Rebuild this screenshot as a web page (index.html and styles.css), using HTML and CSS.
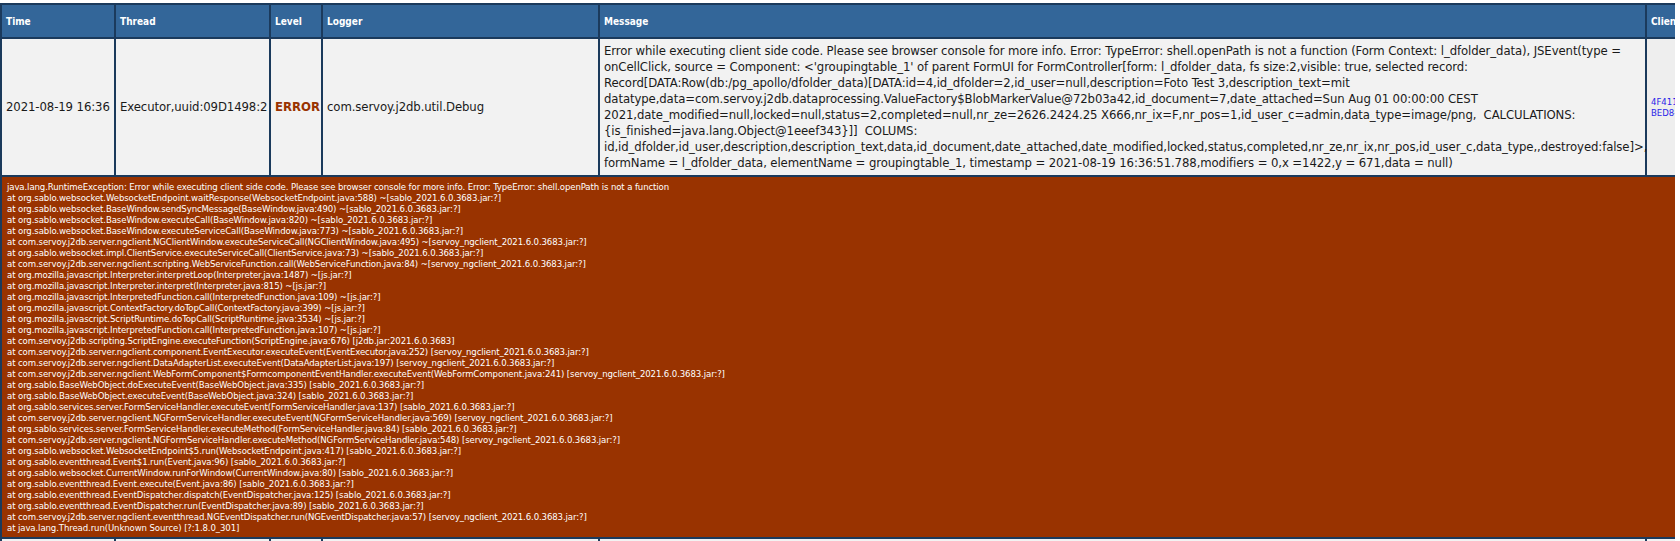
FILE: index.html
```html
<!DOCTYPE html>
<html lang="en">
<head>
<meta charset="utf-8">
<title>Log</title>
<link rel="stylesheet" href="styles.css">
</head>
<body>
<div class="viewport">
<table class="log">
<colgroup><col class="c-time"><col class="c-thread"><col class="c-level"><col class="c-logger"><col class="c-msg"><col class="c-client"></colgroup>
<thead>
<tr><th>Time</th><th>Thread</th><th>Level</th><th>Logger</th><th>Message</th><th>Client</th></tr>
</thead>
<tbody>
<tr class="entry">
<td>2021-08-19 16:36</td>
<td>Executor,uuid:09D1498:2</td>
<td class="level">ERROR</td>
<td>com.servoy.j2db.util.Debug</td>
<td>Error while executing client side code. Please see browser console for more info. Error: TypeError: shell.openPath is not a function (Form Context: l_dfolder_data), JSEvent(type =<br>onCellClick, source = Component: &lt;'groupingtable_1' of parent FormUI for FormController[form: l_dfolder_data, fs size:2,visible: true, selected record:<br>Record[DATA:Row(db:/pg_apollo/dfolder_data)[DATA:id=4,id_dfolder=2,id_user=null,description=Foto Test 3,description_text=mit<br>datatype,data=com.servoy.j2db.dataprocessing.ValueFactory$BlobMarkerValue@72b03a42,id_document=7,date_attached=Sun Aug 01 00:00:00 CEST<br>2021,date_modified=null,locked=null,status=2,completed=null,nr_ze=2626.2424.25 X666,nr_ix=F,nr_pos=1,id_user_c=admin,data_type=image/png, &nbsp;CALCULATIONS:<br>{is_finished=java.lang.Object@1eeef343}]] &nbsp;COLUMS:<br>id,id_dfolder,id_user,description,description_text,data,id_document,date_attached,date_modified,locked,status,completed,nr_ze,nr_ix,nr_pos,id_user_c,data_type,,destroyed:false]&gt;,<br>formName = l_dfolder_data, elementName = groupingtable_1, timestamp = 2021-08-19 16:36:51.788,modifiers = 0,x =1422,y = 671,data = null)</td>
<td class="client"><span class="uuid">4F411E60-</span><br><span class="uuid">BED8-4B4C</span></td>
</tr>
<tr class="trace">
<td colspan="6">java.lang.RuntimeException: Error while executing client side code. Please see browser console for more info. Error: TypeError: shell.openPath is not a function<br>
at org.sablo.websocket.WebsocketEndpoint.waitResponse(WebsocketEndpoint.java:588) ~[sablo_2021.6.0.3683.jar:?]<br>
at org.sablo.websocket.BaseWindow.sendSyncMessage(BaseWindow.java:490) ~[sablo_2021.6.0.3683.jar:?]<br>
at org.sablo.websocket.BaseWindow.executeCall(BaseWindow.java:820) ~[sablo_2021.6.0.3683.jar:?]<br>
at org.sablo.websocket.BaseWindow.executeServiceCall(BaseWindow.java:773) ~[sablo_2021.6.0.3683.jar:?]<br>
at com.servoy.j2db.server.ngclient.NGClientWindow.executeServiceCall(NGClientWindow.java:495) ~[servoy_ngclient_2021.6.0.3683.jar:?]<br>
at org.sablo.websocket.impl.ClientService.executeServiceCall(ClientService.java:73) ~[sablo_2021.6.0.3683.jar:?]<br>
at com.servoy.j2db.server.ngclient.scripting.WebServiceFunction.call(WebServiceFunction.java:84) ~[servoy_ngclient_2021.6.0.3683.jar:?]<br>
at org.mozilla.javascript.Interpreter.interpretLoop(Interpreter.java:1487) ~[js.jar:?]<br>
at org.mozilla.javascript.Interpreter.interpret(Interpreter.java:815) ~[js.jar:?]<br>
at org.mozilla.javascript.InterpretedFunction.call(InterpretedFunction.java:109) ~[js.jar:?]<br>
at org.mozilla.javascript.ContextFactory.doTopCall(ContextFactory.java:399) ~[js.jar:?]<br>
at org.mozilla.javascript.ScriptRuntime.doTopCall(ScriptRuntime.java:3534) ~[js.jar:?]<br>
at org.mozilla.javascript.InterpretedFunction.call(InterpretedFunction.java:107) ~[js.jar:?]<br>
at com.servoy.j2db.scripting.ScriptEngine.executeFunction(ScriptEngine.java:676) [j2db.jar:2021.6.0.3683]<br>
at com.servoy.j2db.server.ngclient.component.EventExecutor.executeEvent(EventExecutor.java:252) [servoy_ngclient_2021.6.0.3683.jar:?]<br>
at com.servoy.j2db.server.ngclient.DataAdapterList.executeEvent(DataAdapterList.java:197) [servoy_ngclient_2021.6.0.3683.jar:?]<br>
at com.servoy.j2db.server.ngclient.WebFormComponent$FormcomponentEventHandler.executeEvent(WebFormComponent.java:241) [servoy_ngclient_2021.6.0.3683.jar:?]<br>
at org.sablo.BaseWebObject.doExecuteEvent(BaseWebObject.java:335) [sablo_2021.6.0.3683.jar:?]<br>
at org.sablo.BaseWebObject.executeEvent(BaseWebObject.java:324) [sablo_2021.6.0.3683.jar:?]<br>
at org.sablo.services.server.FormServiceHandler.executeEvent(FormServiceHandler.java:137) [sablo_2021.6.0.3683.jar:?]<br>
at com.servoy.j2db.server.ngclient.NGFormServiceHandler.executeEvent(NGFormServiceHandler.java:569) [servoy_ngclient_2021.6.0.3683.jar:?]<br>
at org.sablo.services.server.FormServiceHandler.executeMethod(FormServiceHandler.java:84) [sablo_2021.6.0.3683.jar:?]<br>
at com.servoy.j2db.server.ngclient.NGFormServiceHandler.executeMethod(NGFormServiceHandler.java:548) [servoy_ngclient_2021.6.0.3683.jar:?]<br>
at org.sablo.websocket.WebsocketEndpoint$5.run(WebsocketEndpoint.java:417) [sablo_2021.6.0.3683.jar:?]<br>
at org.sablo.eventthread.Event$1.run(Event.java:96) [sablo_2021.6.0.3683.jar:?]<br>
at org.sablo.websocket.CurrentWindow.runForWindow(CurrentWindow.java:80) [sablo_2021.6.0.3683.jar:?]<br>
at org.sablo.eventthread.Event.execute(Event.java:86) [sablo_2021.6.0.3683.jar:?]<br>
at org.sablo.eventthread.EventDispatcher.dispatch(EventDispatcher.java:125) [sablo_2021.6.0.3683.jar:?]<br>
at org.sablo.eventthread.EventDispatcher.run(EventDispatcher.java:89) [sablo_2021.6.0.3683.jar:?]<br>
at com.servoy.j2db.server.ngclient.eventthread.NGEventDispatcher.run(NGEventDispatcher.java:57) [servoy_ngclient_2021.6.0.3683.jar:?]<br>
at java.lang.Thread.run(Unknown Source) [?:1.8.0_301]</td>
</tr>
<tr class="next"><td></td><td></td><td></td><td></td><td></td><td></td></tr>
</tbody>
</table>
</div>
</body>
</html>
```
FILE: styles.css
```css
html, body { margin: 0; padding: 0; background: #fff; }
body { height: 541px; overflow: hidden; }
.viewport { width: 1675px; height: 541px; overflow: hidden; padding-top: 3px; box-sizing: border-box; }
.log {
  table-layout: fixed;
  border-collapse: collapse;
  width: 1800px;
  font-family: "DejaVu Sans Condensed", "DejaVu Sans", sans-serif;
  font-stretch: condensed;
  font-size: 13px;
  letter-spacing: -0.1px;
  color: #1a1a1a;
}
.c-time { width: 114px; }
.c-thread { width: 155px; }
.c-level { width: 52px; }
.c-logger { width: 277px; }
.c-msg { width: 1047px; }
.c-client { width: 155px; }
.log th, .log td { border: 2px solid #1b3a5c; padding: 0 4px; white-space: nowrap; }
.log th {
  height: 32px;
  background: #336699;
  color: #fff;
  font-size: 10px;
  font-weight: 700;
  letter-spacing: 0;
  text-align: left;
}
.entry td { height: 136px; background: #f2f2f2; line-height: 16px; }
.level { color: #993300; font-weight: 700; letter-spacing: 0; }
.entry .client { font-size: 9.5px; line-height: 11px; background: #eeeeee; letter-spacing: 0; }
.uuid { color: #2a1fe8; }
.log .trace td {
  background: #993300;
  color: #fff;
  font-size: 9.5px;
  line-height: 11px;
  letter-spacing: -0.1px;
  padding: 4px 5px;
  height: 352px;
}
.next td { height: 20px; background: #f2f2f2; }
```
